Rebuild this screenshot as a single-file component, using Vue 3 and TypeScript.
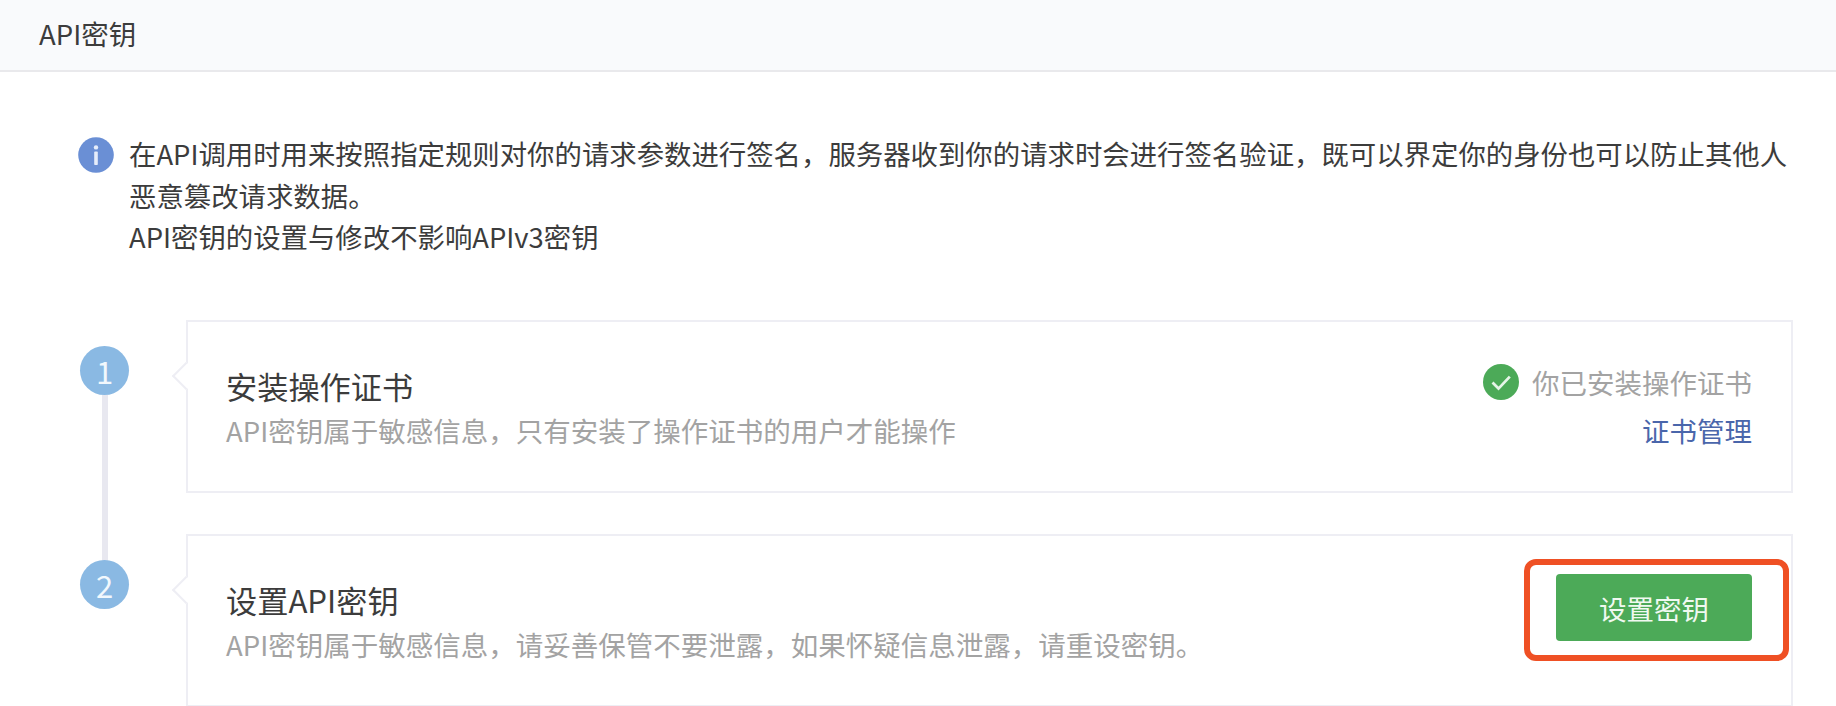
<script setup lang="ts">
interface Step {
  id: number
  title: string
  desc: string
  installed: boolean
}

const steps: Step[] = [
  { id: 1, title: '安装操作证书', desc: 'API密钥属于敏感信息，只有安装了操作证书的用户才能操作', installed: true },
  { id: 2, title: '设置API密钥', desc: 'API密钥属于敏感信息，请妥善保管不要泄露，如果怀疑信息泄露，请重设密钥。', installed: false },
]
</script>

<template>
  <div class="page">
    <header class="head">API密钥</header>
    <main class="body">
      <section class="notice">
        <svg class="info" viewBox="0 0 36 36" aria-hidden="true">
          <circle cx="18" cy="18" r="17.8" fill="#6a8fd5" />
          <circle cx="18" cy="10.4" r="2.2" fill="#e6edfa" />
          <rect x="16.2" y="14.6" width="3.6" height="13.4" rx="0.8" fill="#e6edfa" />
        </svg>
        <p class="notice-text">
          在API调用时用来按照指定规则对你的请求参数进行签名，服务器收到你的请求时会进行签名验证，既可以界定你的身份也可以防止其他人<br />恶意篡改请求数据。<br />API密钥的设置与修改不影响APIv3密钥
        </p>
      </section>

      <section class="steps">
        <div v-for="(step, i) in steps" :key="step.id" class="step">
          <div class="rail">
            <span class="num">{{ step.id }}</span>
            <span v-if="i < steps.length - 1" class="line"></span>
          </div>
          <article class="card">
            <span class="notch"></span>
            <div class="copy">
              <h3 class="title">{{ step.title }}</h3>
              <p class="desc">{{ step.desc }}</p>
            </div>
            <div v-if="step.installed" class="status">
              <div class="ok">
                <svg class="check" viewBox="0 0 36 36" aria-hidden="true">
                  <circle cx="18" cy="18" r="18" fill="#4caa58" />
                  <path d="M9.5 18.6l6 6L26.8 12.6" fill="none" stroke="#e6f5e8" stroke-width="2.8" />
                </svg>
                <span>你已安装操作证书</span>
              </div>
              <a class="link">证书管理</a>
            </div>
            <div v-else class="action">
              <button class="btn" type="button">设置密钥</button>
              <span class="mark"></span>
            </div>
          </article>
        </div>
      </section>
    </main>
  </div>
</template>

<style>
html, body { margin: 0; background: #fff; }
</style>

<style scoped>
.page {
  width: 1836px;
  height: 706px;
  overflow: hidden;
  background: #fff;
  font-family: "Noto Sans CJK SC", "Liberation Sans", sans-serif;
  font-size: 27.5px;
  color: #3c3c3c;
}
.head {
  box-sizing: border-box;
  height: 72px;
  padding: 0 0 5px 39px;
  display: flex;
  align-items: center;
  background: #f9fafc;
  border-bottom: 2px solid #e9e9ec;
}
.body {
  padding: 61px 43px 0 78px;
}
.notice {
  display: flex;
  gap: 16px;
}
.info {
  flex: none;
  width: 36px;
  height: 36px;
  margin-top: 4px;
}
.notice-text {
  margin: 0;
  margin-left: -1px;
  font-size: 27.4px;
  line-height: 41.5px;
  white-space: nowrap;
}
.steps {
  margin-top: 62.5px;
}
.step {
  display: flex;
  margin-bottom: 41px;
}
.rail {
  flex: none;
  width: 108px;
  padding: 26px 0 0 2px;
  box-sizing: border-box;
  display: flex;
  flex-direction: column;
}
.num {
  width: 49px;
  height: 49px;
  border-radius: 50%;
  background: #8ab9e3;
  color: #f2f8fd;
  display: flex;
  align-items: center;
  justify-content: center;
  position: relative;
  z-index: 1;
  font-size: 31px;
}
.line {
  flex: 1;
  width: 6px;
  margin: 0 0 -68px 22px;
  background: #e8e8f0;
}
.card {
  position: relative;
  flex: 1;
  box-sizing: border-box;
  height: 173px;
  padding: 0 39px 0 38px;
  border: 2px solid #eeeef4;
  display: flex;
  justify-content: space-between;
}
.notch {
  position: absolute;
  left: -12px;
  top: 44px;
  width: 20px;
  height: 20px;
  box-sizing: border-box;
  background: #fff;
  border-left: 2px solid #eeeef4;
  border-bottom: 2px solid #eeeef4;
  transform: rotate(45deg);
}
.copy {
  padding-top: 42px;
}
.title {
  margin: 0;
  font-size: 31.2px;
  font-weight: 400;
  line-height: 44px;
  color: #3c3c3c;
}
.desc {
  margin: 0;
  line-height: 44px;
  color: #a3a3a3;
}
.status {
  padding-top: 40px;
  display: flex;
  flex-direction: column;
  align-items: flex-end;
  line-height: 40px;
  color: #a3a3a3;
}
.ok {
  display: flex;
  align-items: center;
  gap: 13px;
  height: 40px;
}
.check {
  width: 36px;
  height: 36px;
}
.link {
  margin-top: 8px;
  color: #4a66ab;
}
.action {
  position: relative;
  padding-top: 38px;
}
.btn {
  width: 196px;
  height: 67px;
  padding: 0;
  border: 0;
  border-radius: 4px;
  background: #4caa58;
  color: #f0f9f1;
  font: inherit;
}
.mark {
  position: absolute;
  left: -32px;
  top: 22.5px;
  width: 265px;
  height: 102px;
  box-sizing: border-box;
  border: 6px solid #ef5024;
  border-radius: 12px;
}
</style>
